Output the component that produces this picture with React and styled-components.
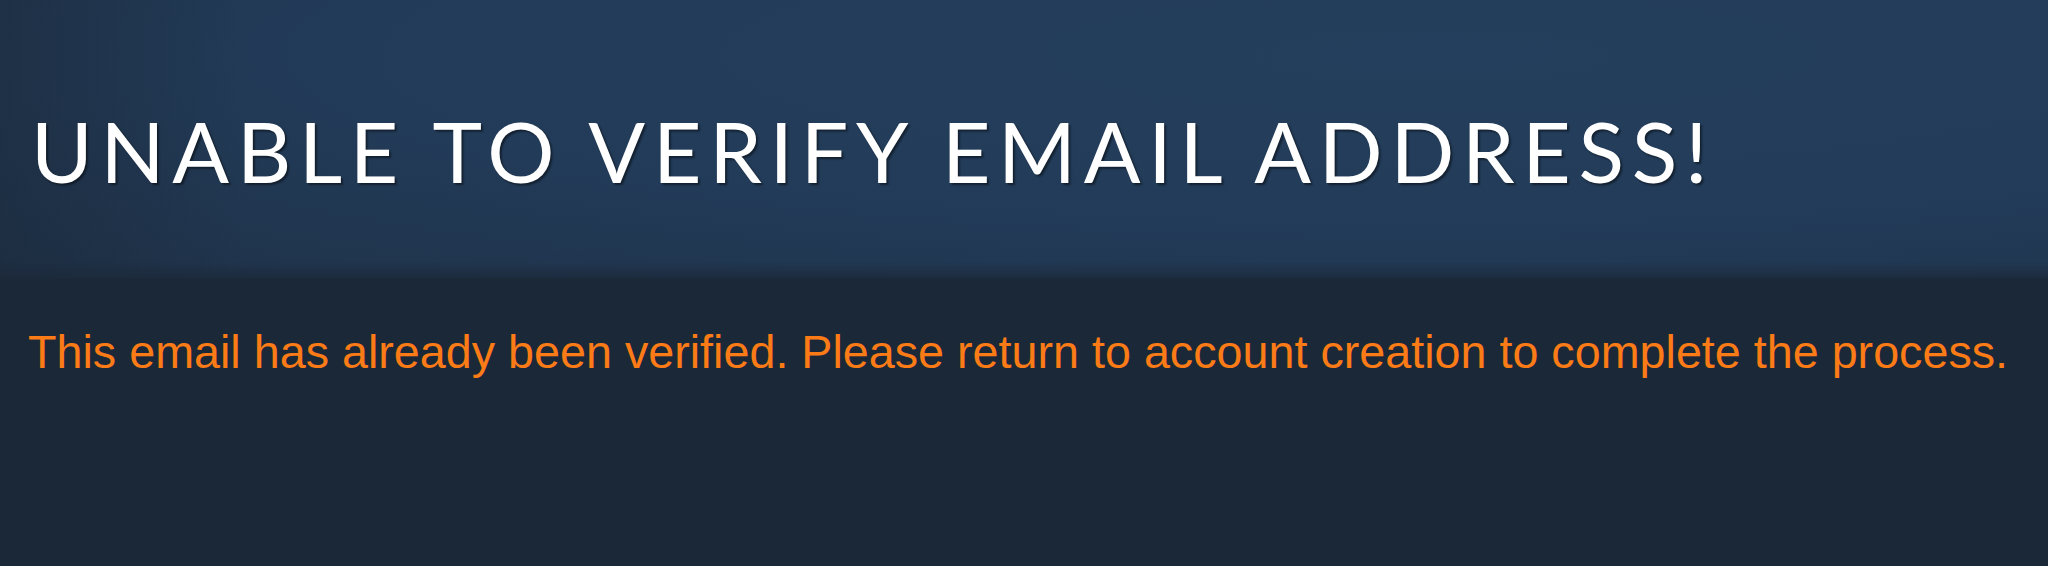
import styled, { createGlobalStyle } from "styled-components";

const GlobalStyle = createGlobalStyle`
  html, body {
    margin: 0;
    padding: 0;
    background: #1b2838;
  }
  body {
    min-height: 566px;
  }
`;

const Page = styled.div`
  display: flex;
  flex-direction: column;
  min-height: 566px;
  background: #1b2838;
`;

const Header = styled.header`
  height: 278px;
  box-sizing: border-box;
  padding: 101px 0 0 31px;
  background:
    linear-gradient(to bottom, rgba(27, 40, 56, 0) 94%, rgba(27, 40, 56, 0.7) 100%),
    linear-gradient(to right, rgba(27, 40, 56, 0.45) 0%, rgba(27, 40, 56, 0) 12%),
    radial-gradient(ellipse 120% 140% at 70% 20%, #243f5d 0%, #223b58 45%, #1f3249 80%, #1c2a3d 100%);
`;

const Title = styled.h1`
  margin: 0;
  font-family: Lato, "Open Sans", sans-serif;
  font-weight: 400;
  font-size: 84px;
  line-height: 1.2;
  letter-spacing: 7.7px;
  color: #ffffff;
  text-transform: uppercase;
  white-space: nowrap;
  text-shadow: 2px 2px 2px rgba(0, 0, 0, 0.45);
`;

const Body = styled.main`
  padding: 48px 0 0 28px;
`;

const ErrorText = styled.p`
  margin: 0;
  font-family: "Liberation Sans", Arial, sans-serif;
  font-size: 46.7px;
  line-height: 1.15;
  color: #fb7b17;
  white-space: nowrap;
`;

export default function App() {
  return (
    <>
      <GlobalStyle />
      <Page>
        <Header>
          <Title>Unable to verify email address!</Title>
        </Header>
        <Body>
          <ErrorText>
            This email has already been verified. Please return to account creation to complete the process.
          </ErrorText>
        </Body>
      </Page>
    </>
  );
}
